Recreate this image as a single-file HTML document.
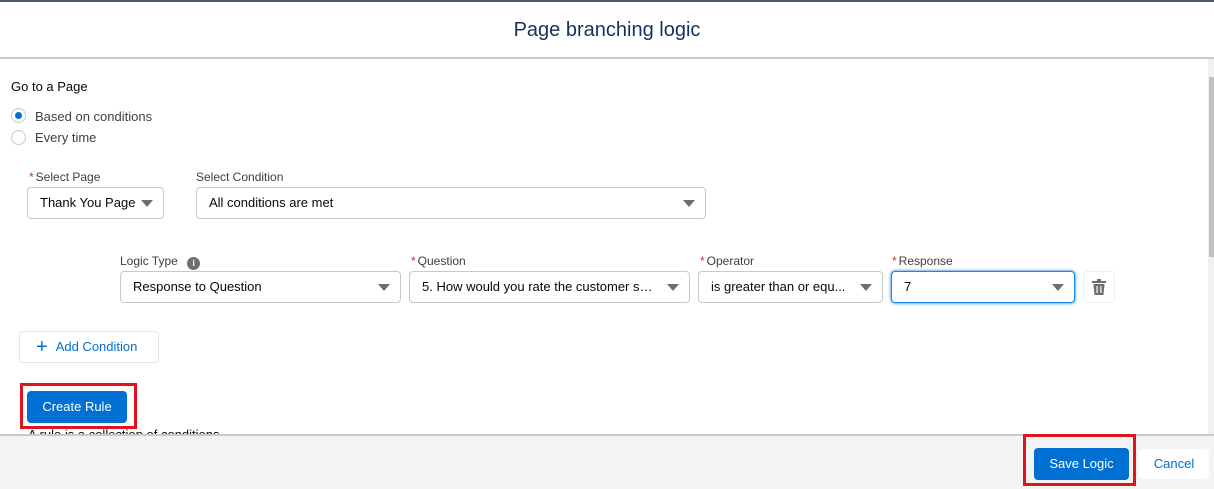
<!DOCTYPE html>
<html><head><style>
*{box-sizing:border-box;margin:0;padding:0}
body{width:1214px;height:489px;overflow:hidden;background:#fff;font-family:"Liberation Sans",sans-serif;position:relative;color:#080707}
.a{position:absolute}
.lbl{font-size:12px;color:#3e3e3c}
.star{color:#c23934;margin-right:2px}
.sel{position:absolute;height:32px;border:1px solid #c9c9c9;border-radius:4px;background:#fff;font-size:13px;color:#080707;padding:0 12px;line-height:30px;white-space:nowrap;overflow:hidden}
.sel:after{content:"";position:absolute;right:10px;top:12px;border-left:6px solid transparent;border-right:6px solid transparent;border-top:7px solid #706e6b}
.radio{position:absolute;width:15px;height:15px;border:1px solid #c9c9c9;border-radius:50%;background:#fff}
</style></head><body>
<div class="a" style="left:0;top:0;width:1214px;height:2px;background:#4a5868"></div>
<div class="a" style="left:0;top:19px;width:1214px;text-align:center;font-size:20px;color:#16325c">Page branching logic</div>
<div class="a" style="left:0;top:57px;width:1214px;height:2px;background:#c9c9c9"></div>
<div class="a" style="left:1208px;top:59px;width:6px;height:375px;background:#f1f1f1"></div>
<div class="a" style="left:1209px;top:77px;width:5px;height:180px;background:#c1c1c1"></div>

<div class="a" style="left:11px;top:79px;font-size:13px;color:#080707">Go to a Page</div>
<div class="radio" style="left:11px;top:108px;"><div style="position:absolute;left:3px;top:3px;width:7px;height:7px;border-radius:50%;background:#0070d2"></div></div>
<div class="a" style="left:35px;top:109px;font-size:13px;color:#3e3e3c">Based on conditions</div>
<div class="radio" style="left:11px;top:130px;"></div>
<div class="a" style="left:35px;top:130px;font-size:13px;color:#3e3e3c">Every time</div>

<div class="a lbl" style="left:29px;top:170px"><span class="star">*</span>Select Page</div>
<div class="sel" style="left:27px;top:187px;width:137px">Thank You Page</div>
<div class="a lbl" style="left:196px;top:170px">Select Condition</div>
<div class="sel" style="left:196px;top:187px;width:510px">All conditions are met</div>

<div class="a lbl" style="left:120px;top:254px">Logic Type <span style="display:inline-block;width:13px;height:13px;border-radius:50%;background:#706e6b;color:#fff;font-size:9px;text-align:center;line-height:13px;font-weight:bold;margin-left:6px;vertical-align:-1px">i</span></div>
<div class="sel" style="left:120px;top:271px;width:281px">Response to Question</div>
<div class="a lbl" style="left:411px;top:254px"><span class="star">*</span>Question</div>
<div class="sel" style="left:409px;top:271px;width:281px;padding-right:34px;text-overflow:ellipsis">5. How would you rate the customer se...</div>
<div class="a lbl" style="left:700px;top:254px"><span class="star">*</span>Operator</div>
<div class="sel" style="left:698px;top:271px;width:185px">is greater than or equ...</div>
<div class="a lbl" style="left:892px;top:254px"><span class="star">*</span>Response</div>
<div class="sel" style="left:891px;top:271px;width:184px;border-color:#1589ee;box-shadow:0 0 3px #0070d2">7</div>
<div class="a" style="left:1083px;top:271px;width:32px;height:32px;border:1px solid #eee;border-radius:4px">
<svg width="14" height="16" viewBox="0 0 14 16" style="position:absolute;left:8px;top:7px"><rect x="0" y="2" width="14" height="2" fill="#706e6b"/><rect x="5" y="0" width="4" height="3" fill="#706e6b"/><path d="M1.5 5h11l-1 11h-9z" fill="#706e6b"/><rect x="4.5" y="7" width="1.2" height="7" fill="#fff"/><rect x="8.3" y="7" width="1.2" height="7" fill="#fff"/></svg></div>

<div class="a" style="left:19px;top:331px;width:140px;height:32px;border:1px solid #e5e5e5;border-radius:4px;font-size:13px;color:#0070d2;line-height:30px;padding-left:16px"><span style="font-size:20px;vertical-align:-2px;margin-right:8px">+</span>Add Condition</div>

<div class="a" style="left:20px;top:383px;width:117px;height:46px;border:3px solid #e0141e"></div>
<div class="a" style="left:27px;top:391px;width:100px;height:32px;background:#0070d2;border-radius:4px;color:#fff;font-size:13px;text-align:center;line-height:32px">Create Rule</div>
<div class="a" style="left:28px;top:427px;font-size:13px;color:#080707">A rule is a collection of conditions.</div>

<div class="a" style="left:0;top:434px;width:1214px;height:55px;background:#f3f3f3;border-top:2px solid #c9c9c9"></div>
<div class="a" style="left:1023px;top:434px;width:113px;height:52px;border:3px solid #e0141e"></div>
<div class="a" style="left:1034px;top:448px;width:95px;height:32px;background:#0070d2;border-radius:4px;color:#fff;font-size:13px;text-align:center;line-height:32px">Save Logic</div>
<div class="a" style="left:1139px;top:449px;width:70px;height:30px;background:#fff;border-radius:4px;color:#0070d2;font-size:13px;text-align:center;line-height:30px">Cancel</div>
</body></html>
